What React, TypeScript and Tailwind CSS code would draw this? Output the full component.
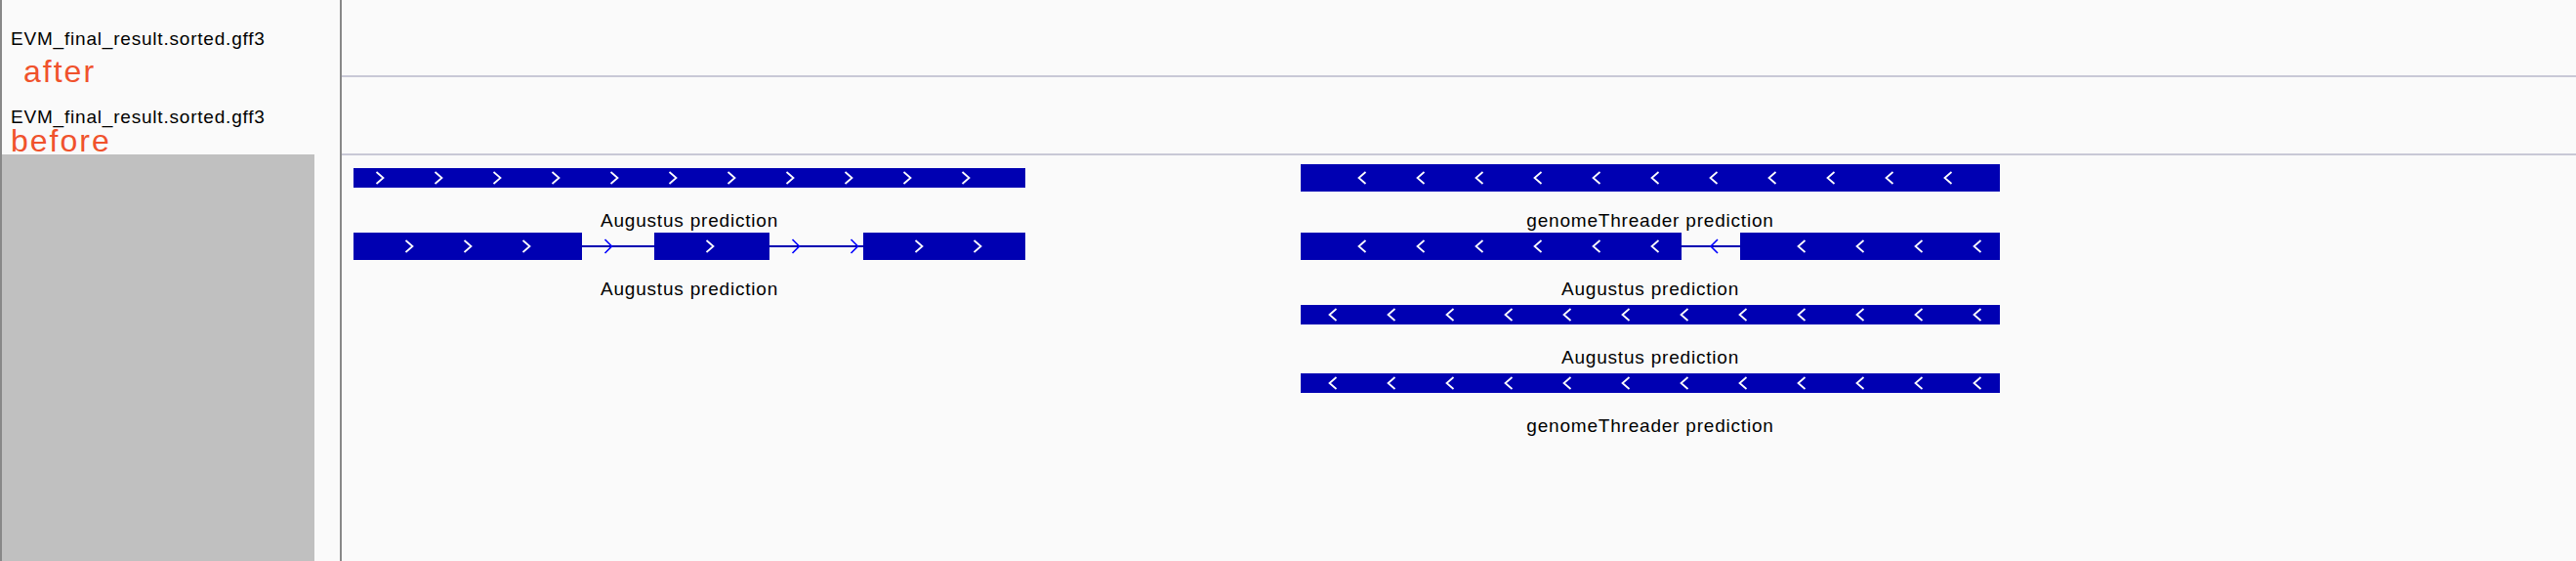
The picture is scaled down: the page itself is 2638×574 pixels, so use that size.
type Gene = {
  x: number
  y: number
  w: number
  h: number
  dir: 1 | -1
  exons: [number, number][]
  chevrons: number[]
  arrows: number[]
  label: string
  labelTop: number
}

const range = (start: number, count: number) =>
  Array.from({ length: count }, (_, i) => start + i * 60)

const genes: Gene[] = [
  {
    x: 12, y: 13, w: 688, h: 20, dir: 1,
    exons: [[0, 688]],
    chevrons: range(27, 11),
    arrows: [],
    label: "Augustus prediction", labelTop: 57,
  },
  {
    x: 12, y: 79, w: 688, h: 28, dir: 1,
    exons: [[0, 234], [308, 426], [522, 688]],
    chevrons: [57, 117, 177, 365, 579, 639],
    arrows: [261, 453, 513],
    label: "Augustus prediction", labelTop: 127,
  },
  {
    x: 982, y: 9, w: 716, h: 28, dir: -1,
    exons: [[0, 716]],
    chevrons: range(63, 11),
    arrows: [],
    label: "genomeThreader prediction", labelTop: 57,
  },
  {
    x: 982, y: 79, w: 716, h: 28, dir: -1,
    exons: [[0, 390], [450, 716]],
    chevrons: [...range(63, 6), ...range(513, 4)],
    arrows: [423.5],
    label: "Augustus prediction", labelTop: 127,
  },
  {
    x: 982, y: 153, w: 716, h: 20, dir: -1,
    exons: [[0, 716]],
    chevrons: range(33, 12),
    arrows: [],
    label: "Augustus prediction", labelTop: 197,
  },
  {
    x: 982, y: 223, w: 716, h: 20, dir: -1,
    exons: [[0, 716]],
    chevrons: range(33, 12),
    arrows: [],
    label: "genomeThreader prediction", labelTop: 267,
  },
]

const chevronPoints = (cx: number, cy: number, dir: 1 | -1, half: number) =>
  `${cx - 3.5 * dir},${cy - half} ${cx + 3.5 * dir},${cy} ${cx - 3.5 * dir},${cy + half}`

const GeneGlyph = ({ gene }: { gene: Gene }) => {
  const cy = gene.h / 2
  return (
    <svg
      className="absolute"
      style={{ left: gene.x, top: gene.y }}
      width={gene.w}
      height={gene.h}
      viewBox={`0 0 ${gene.w} ${gene.h}`}
    >
      {gene.exons.length > 1 && (
        <rect x={0} y={cy - 1} width={gene.w} height={2} fill="#0000b2" />
      )}
      {gene.exons.map(([a, b]) => (
        <rect key={a} x={a} y={0} width={b - a} height={gene.h} fill="#0000b2" />
      ))}
      {gene.chevrons.map((c) => (
        <polyline
          key={c}
          points={chevronPoints(c, cy, gene.dir, 6)}
          fill="none"
          stroke="#ffffff"
          strokeWidth={1.75}
        />
      ))}
      {gene.arrows.map((c) => (
        <polyline
          key={c}
          points={chevronPoints(c, cy, gene.dir, 7)}
          fill="none"
          stroke="#0000ff"
          strokeWidth={1.6}
        />
      ))}
    </svg>
  )
}

const GeneLabel = ({ gene }: { gene: Gene }) => (
  <div
    className="absolute text-center whitespace-nowrap text-[19px] leading-[19px] tracking-[0.8px] text-black"
    style={{ left: gene.x, top: gene.labelTop, width: gene.w }}
  >
    {gene.label}
  </div>
)

export default function App() {
  return (
    <div className="flex w-[2638px] h-[574px] bg-[#fafafa] font-['Liberation_Sans',Arial,sans-serif] overflow-hidden">
      {/* track names */}
      <div className="flex flex-col w-[350px] h-full border-l-2 border-r-2 border-[#888888] shrink-0">
        <div className="pl-[9px] pt-[30px] text-[19px] leading-[19px] tracking-[0.8px] text-black">
          EVM_final_result.sorted.gff3
        </div>
        <div className="pl-[22px] mt-[8px] text-[32px] leading-[32px] tracking-[2px] text-[#f0522c]">
          after
        </div>
        <div className="pl-[9px] mt-[21px] text-[19px] leading-[19px] tracking-[0.8px] text-black">
          EVM_final_result.sorted.gff3
        </div>
        <div className="pl-[9px] mt-[2px] text-[32px] leading-[27px] tracking-[2px] text-[#f0522c]">
          before
        </div>
        <div className="flex-1 w-[320px] bg-[#c0c0c0]" />
      </div>

      {/* tracks */}
      <div className="flex flex-col flex-1 h-full">
        <div className="h-[77px]" />
        <div className="h-[2px] bg-[#c8c8d6]" />
        <div className="h-[78px]" />
        <div className="h-[2px] bg-[#c8c8d6]" />
        <div className="relative flex-1">
          {genes.map((g, i) => (
            <GeneGlyph key={`g${i}`} gene={g} />
          ))}
          {genes.map((g, i) => (
            <GeneLabel key={`l${i}`} gene={g} />
          ))}
        </div>
      </div>
    </div>
  )
}
